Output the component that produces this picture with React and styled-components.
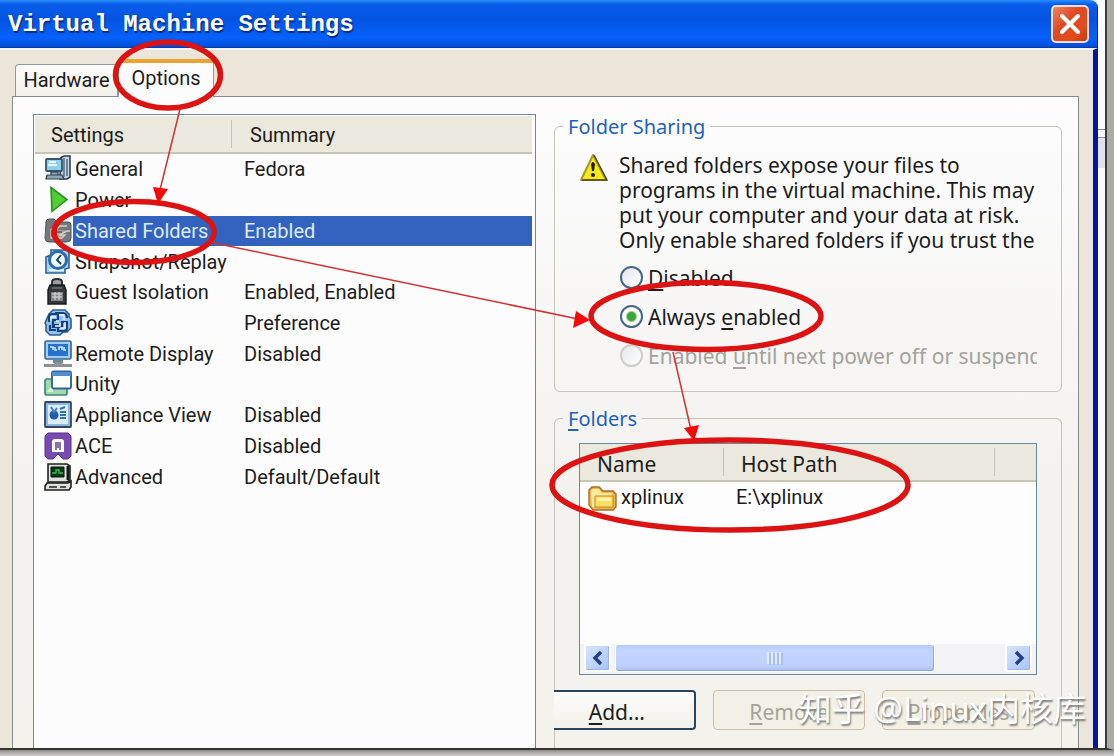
import React, { useState } from "react";
import styled, { createGlobalStyle } from "styled-components";

const settings = [
  { name: "General", summary: "Fedora", icon: "general" },
  { name: "Power", summary: "", icon: "power" },
  { name: "Shared Folders", summary: "Enabled", icon: "shared" },
  { name: "Snapshot/Replay", summary: "", icon: "snapshot" },
  { name: "Guest Isolation", summary: "Enabled, Enabled", icon: "guest" },
  { name: "Tools", summary: "Preference", icon: "tools" },
  { name: "Remote Display", summary: "Disabled", icon: "remote" },
  { name: "Unity", summary: "", icon: "unity" },
  { name: "Appliance View", summary: "Disabled", icon: "appliance" },
  { name: "ACE", summary: "Disabled", icon: "ace" },
  { name: "Advanced", summary: "Default/Default", icon: "advanced" },
];

const drawings = {
  general: (
    <>
      <path d="M17 2.5 20 1h6v21l-3 2h-7z" fill="#c9d8e4" stroke="#2c3e50" strokeWidth="1.6" />
      <path d="M20 3v19M23 4v17" stroke="#4a6478" strokeWidth="1.4" />
      <rect x="2" y="4" width="16" height="12" rx="1" fill="#8fd0f0" stroke="#34556e" strokeWidth="1.8" />
      <path d="M4 10h9M5 7h7" stroke="#e4f8ff" strokeWidth="2" />
      <path d="M7 17h7v3H7zM3 20h15l2 4H2z" fill="#8fa6b8" stroke="#2c3e50" strokeWidth="1.2" />
    </>
  ),
  power: <path d="M7 1.5 23 13.5 8 25.5z" fill="#4fce35" stroke="#2d8f20" strokeWidth="1.6" />,
  shared: (
    <>
      <path d="M2 5q0-3 3-3h5l3 3h11q3 0 3 3v13q0 4-4 4H5q-4 0-4-4z" fill="#72797c" stroke="#51585b" />
      <path d="M7 12h6l3-3h7M7 12v9h11l3-3h-6l8-4h3" fill="#a6a29d" stroke="#d2cec6" strokeWidth="1.4" />
      <path d="M8 13v7M11 15h7" stroke="#5a5c5d" strokeWidth="1.4" />
    </>
  ),
  snapshot: (
    <>
      <path d="M2 9l5-2v-5h18v18l-4 1v4H2z" fill="#a8d3f2" stroke="#2c639c" strokeWidth="1.6" />
      <path d="M5 22h15" stroke="#e6f5ff" strokeWidth="2" />
      <circle cx="14" cy="12" r="8.5" fill="#edf8ff" stroke="#2c6ba7" strokeWidth="3" />
      <path d="M17 7l-4 5 4 4" fill="none" stroke="#1b3f68" strokeWidth="2" />
    </>
  ),
  guest: (
    <>
      <path d="M8 8V4q0-3 5-3t5 3v4z" fill="#9da1a2" stroke="#2b2e2f" strokeWidth="2" />
      <path d="M6 7h14l2 5v14H4V12z" fill="#34383a" stroke="#191b1c" strokeWidth="1.4" />
      <path d="M7 14h12v9H7z" fill="#7e8384" />
      <path d="M8 16h10M8 19h10M11 14v8M15 14v8" stroke="#dadddd" strokeWidth="1" />
      <path d="M8 10h10" stroke="#6d7172" strokeWidth="1.5" />
    </>
  ),
  tools: (
    <>
      <path d="M5 5l4-4h12l4 4v3l2 2v9l-4 4h-4l-3 3H6l-4-4v-6l-1-2z" fill="#8ec3ed" stroke="#2d5d8c" strokeWidth="1.6" />
      <path d="M5 13V8q0-3 3-3h6v6H9v7h9v-5h5v6q0 3-3 3h-6v-6h-4M11 4h8q4 0 4 5M6 16v5h6" fill="none" stroke="#173f7b" strokeWidth="2.2" />
      <path d="M7 12V8h5M16 14v3h-5M15 6h5v5M21 13v6h-5M12 12h3" fill="none" stroke="#f0f9ff" strokeWidth="1.3" />
    </>
  ),
  remote: (
    <>
      <rect x="1" y="1" width="26" height="18" rx="1.5" fill="#a3cdf0" stroke="#35648d" strokeWidth="1.6" />
      <rect x="4" y="4" width="20" height="12" fill="#2572d0" />
      <path d="M6 7h3v3M11 7v3h2M15 10V7h3v3M20 7v3h2" fill="none" stroke="#cbecff" strokeWidth="1.6" />
      <path d="M9 20h10v3H9z" fill="#6e8497" />
      <path d="M0 24h10l2-2h5l2 2h9v3H0z" fill="#8e9295" />
    </>
  ),
  unity: (
    <>
      <rect x="1" y="9" width="22" height="16" rx="2" fill="#a3d9ad" stroke="#3e8580" strokeWidth="1.7" />
      <path d="M3 22L9 14v8z" fill="#d9f6db" />
      <rect x="8" y="1.5" width="19" height="17" rx="1.5" fill="#fbfdff" stroke="#346494" strokeWidth="1.9" />
      <path d="M8 4h19" stroke="#4f8fcb" strokeWidth="4" />
    </>
  ),
  appliance: (
    <>
      <rect x="1" y="1" width="26" height="25" rx="1" fill="#8eb9dd" stroke="#31465e" strokeWidth="1.8" />
      <rect x="4" y="4" width="20" height="19" fill="#dceefd" />
      <circle cx="10" cy="14" r="4.5" fill="#235fa8" />
      <path d="M7 6l3 5 3-4" fill="none" stroke="#3b83c9" strokeWidth="2" />
      <path d="M16 8l5-2M16 11h6M16 14h6M16 17h6" stroke="#3471b2" strokeWidth="2" />
    </>
  ),
  ace: (
    <>
      <path d="M4 1h20l3 3v20l-3 3h-5l-5-5-5 5H4l-3-3V4z" fill="#794bb0" stroke="#593188" />
      <path d="M8 20V10q0-3 3-3h6q3 0 3 3v10z" fill="#fff" />
      <path d="M11 10h6v8h-2v-2h-2v2h-2z" fill="#8b70a9" />
    </>
  ),
  advanced: (
    <>
      <path d="M4 1h19l3 2v14l-3 2H4z" fill="#dfe2dd" stroke="#1f2421" strokeWidth="1.6" />
      <path d="M7 4h13v10H7z" fill="#073b18" stroke="#111" />
      <path d="M8 10h4V7h3v3h4" fill="none" stroke="#3bb65e" strokeWidth="1.3" />
      <path d="M24 3v14" stroke="#151915" strokeWidth="3" />
      <path d="M3 20h21l3-2v6l-2 3H1v-4z" fill="#dfe0dc" stroke="#1b1f1b" strokeWidth="1.6" />
      <path d="M5 24h8M16 24h6" stroke="#202320" strokeWidth="1.6" />
    </>
  ),
};

const Annotations = () => (
  <Overlay width="1114" height="756" viewBox="0 0 1114 756" aria-hidden="true">
    <g fill="none" stroke="#dd1212" strokeWidth="5.5">
      <ellipse cx="168" cy="75" rx="52.5" ry="33" />
      <ellipse cx="134" cy="232" rx="80" ry="30.5" />
      <ellipse cx="706" cy="316" rx="115" ry="33.5" />
      <ellipse cx="730" cy="485" rx="178" ry="45" />
    </g>
    <path d="M180 109L160 190M214 243L578 319M673 352L691 430" fill="none" stroke="#d63030" strokeWidth="1.5" />
    <path d="M153 187l15 2-10 15zM576 311l14 9-17 8zM684 428l15-3-5 16z" fill="#f40808" />
  </Overlay>
);

const App = () => {
  const [selected, setSelected] = useState("Shared Folders");
  const [sharing, setSharing] = useState("always");

  return (
    <>
      <GlobalStyle />
      <Desktop>
        <Dialog>
          <TitleBar>
            <h1>Virtual Machine Settings</h1>
            <CloseButton aria-label="Close">
              <svg width="24" height="24" viewBox="0 0 24 24">
                <path d="M4 4L20 20M20 4L4 20" stroke="#fff" strokeWidth="4" strokeLinecap="round" />
              </svg>
            </CloseButton>
          </TitleBar>
          <Client>
            <Tabs role="tablist">
              <Tab role="tab">Hardware</Tab>
              <Tab role="tab" aria-selected="true" $active>
                Options
              </Tab>
            </Tabs>
            <TabPage>
              <SettingsList>
                <SettingsTable>
                  <colgroup>
                    <IconColumn />
                    <NameColumn />
                    <col />
                  </colgroup>
                  <thead>
                    <tr>
                      <th colSpan="2">Settings</th>
                      <th>Summary</th>
                    </tr>
                  </thead>
                  <tbody>
                    {settings.map((item) => (
                      <SettingRow
                        key={item.name}
                        $selected={item.name === selected}
                        onClick={() => setSelected(item.name)}
                      >
                        <td>
                          <svg width="28" height="28" viewBox="0 0 28 28">
                            {drawings[item.icon]}
                          </svg>
                        </td>
                        <td>{item.name}</td>
                        <td>{item.summary}</td>
                      </SettingRow>
                    ))}
                  </tbody>
                </SettingsTable>
              </SettingsList>

              <Details>
                <Group>
                  <legend>Folder Sharing</legend>
                  <Warning>
                    <svg width="30" height="30" viewBox="0 0 30 30">
                      <path d="M14 2l13 25H2z" fill="#f6ea16" stroke="#a69a22" strokeWidth="2" strokeLinejoin="round" />
                      <path d="M15 2l13 25H3" fill="none" stroke="#4c4520" strokeWidth="1.4" />
                      <path d="M12 11q2-4 4 0l-1 7h-2z" fill="#211d08" />
                      <circle cx="14" cy="22" r="2" fill="#211d08" />
                    </svg>
                    <p>
                      Shared folders expose your files to
                      <br />
                      programs in the virtual machine. This may
                      <br />
                      put your computer and your data at risk.
                      <br />
                      Only enable shared folders if you trust the
                    </p>
                  </Warning>
                  <Choices>
                    <Choice>
                      <input
                        type="radio"
                        name="sharing"
                        checked={sharing === "disabled"}
                        onChange={() => setSharing("disabled")}
                      />
                      <span>
                        <u>D</u>isabled
                      </span>
                    </Choice>
                    <Choice>
                      <input
                        type="radio"
                        name="sharing"
                        checked={sharing === "always"}
                        onChange={() => setSharing("always")}
                      />
                      <span>
                        Always <u>e</u>nabled
                      </span>
                    </Choice>
                    <Choice $disabled>
                      <input type="radio" name="sharing" disabled />
                      <span>
                        Enabled <u>u</u>ntil next power off or suspend
                      </span>
                    </Choice>
                  </Choices>
                </Group>

                <Group $open>
                  <legend>
                    <u>F</u>olders
                  </legend>
                  <FolderBox>
                    <FolderTable>
                      <thead>
                        <tr>
                          <th>Name</th>
                          <th>Host Path</th>
                          <th aria-label="Status" />
                        </tr>
                      </thead>
                      <tbody>
                        <tr>
                          <td>
                            <FolderName>
                              <svg width="30" height="26" viewBox="0 0 30 26">
                                <path d="M1 20V5l3-3h7l4 4h10l3 3v13l-3 3H5z" fill="#e9b54a" stroke="#a96d21" strokeWidth="1.4" />
                                <path d="M3 6l2-2h6l3 4h10v3H7v11H4z" fill="#ffe99b" />
                                <path d="M7 11h18v11H7z" fill="#fbdf64" stroke="#c4872a" />
                                <path d="M9 13h14v3H9z" fill="#fff3a6" />
                              </svg>
                              xplinux
                            </FolderName>
                          </td>
                          <td>E:\xplinux</td>
                          <td />
                        </tr>
                      </tbody>
                    </FolderTable>
                    <ScrollBar>
                      <ScrollButton aria-label="Scroll left">
                        <svg width="14" height="16" viewBox="0 0 14 16">
                          <path d="M10 2L4 8l6 6" fill="none" stroke="#233f87" strokeWidth="3.4" />
                        </svg>
                      </ScrollButton>
                      <Track>
                        <Thumb>
                          <svg width="16" height="14" viewBox="0 0 16 14">
                            <path d="M1 1v12M5 1v12M9 1v12M13 1v12" stroke="#edf3ff" strokeWidth="1.5" />
                            <path d="M3 2v12M7 2v12M11 2v12M15 2v12" stroke="#98b2ed" strokeWidth="1.2" />
                          </svg>
                        </Thumb>
                      </Track>
                      <ScrollButton aria-label="Scroll right">
                        <svg width="14" height="16" viewBox="0 0 14 16">
                          <path d="M4 2l6 6-6 6" fill="none" stroke="#233f87" strokeWidth="3.4" />
                        </svg>
                      </ScrollButton>
                    </ScrollBar>
                  </FolderBox>
                  <Actions>
                    <AddButton>
                      <u>A</u>dd...
                    </AddButton>
                    <ActionButton disabled>
                      <u>R</u>emove
                    </ActionButton>
                    <ActionButton disabled>
                      <u>P</u>roperties
                    </ActionButton>
                  </Actions>
                </Group>
              </Details>
            </TabPage>
          </Client>
        </Dialog>
        <Behind />
        <Annotations />
        <Watermark>知乎 @Linux内核库</Watermark>
      </Desktop>
    </>
  );
};

export default App;

const GlobalStyle = createGlobalStyle`
  * {
    box-sizing: border-box;
  }
  body {
    margin: 0;
    overflow: hidden;
    background: #bcbab6;
  }
  body, button, input {
    font-family: "Noto Sans", "Open Sans", sans-serif;
    font-size: 21px;
    line-height: 25px;
    color: #1c1c1c;
  }
  u {
    text-underline-offset: 3px;
    text-decoration-thickness: 2px;
  }
  svg {
    display: block;
    flex-shrink: 0;
  }
`;

const Desktop = styled.div`
  position: relative;
  display: flex;
  height: 100vh;
  padding-bottom: 6px;
  overflow: hidden;
  background: linear-gradient(to top, #d4d2ce, #8c8b88 6px, #fafaff 6px);
`;

const Dialog = styled.main`
  flex: 1;
  min-width: 0;
  display: flex;
  flex-direction: column;
  border-bottom: 2px solid #333532;
  border-top-right-radius: 8px;
  background: #ebe6d9;
  overflow: hidden;
`;

const Behind = styled.div`
  width: 16px;
  border-right: 7px solid #adaca2;
  border-bottom: 2px solid #333532;
  background:
    linear-gradient(#3c3c3c, #3c3c3c) right / 2px 100% no-repeat,
    linear-gradient(#8c8ab4, #8c8ab4) 0 129px / 100% 1px no-repeat,
    linear-gradient(#8c8ab4, #8c8ab4) 0 137px / 100% 1px no-repeat,
    linear-gradient(#e2e2ea, #e2e2ea) 0 138px / 100% 30px no-repeat,
    #fafaff;
`;

const TitleBar = styled.header`
  display: flex;
  align-items: center;
  justify-content: space-between;
  height: 48px;
  flex-shrink: 0;
  padding: 0 8px;
  border-right: 1px solid #0613a5;
  background: linear-gradient(#2a90fb, #0a5eea 4px, #0353e2 18px, #0562fb 38px, #0450d8 46px, #0338a8);
  h1 {
    margin: 0;
    font: bold 24px "Liberation Mono", monospace;
    color: #fff;
    text-shadow: 1px 2px 1px #0a2c7c;
  }
`;

const CloseButton = styled.button`
  display: flex;
  align-items: center;
  justify-content: center;
  width: 38px;
  height: 38px;
  padding: 0;
  border: 2px solid #f5dcdc;
  border-radius: 5px;
  background: linear-gradient(135deg, #ee8466, #dd4a24 40%, #e34a1a 75%, #c23a12);
`;

const Client = styled.div`
  flex: 1;
  min-height: 0;
  display: flex;
  flex-direction: column;
  padding: 10px 14px 0 12px;
  border-top: 2px solid #f4f6fb;
  border-right: 5px solid #0613a5;
`;

const Tabs = styled.div`
  display: flex;
  align-items: flex-end;
  height: 36px;
  flex-shrink: 0;
  padding-left: 3px;
`;

const Tab = styled.button`
  width: ${({ $active }) => ($active ? "96px" : "103px")};
  height: ${({ $active }) => ($active ? "38px" : "32px")};
  margin-bottom: ${({ $active }) => ($active ? "-1px" : "0")};
  padding: 0 0 ${({ $active }) => ($active ? "4px" : "0")};
  border: 1px solid #8d9a9c;
  border-top: ${({ $active }) => ($active ? "4px solid #eda233" : "1px solid #8d9a9c")};
  border-bottom: none;
  border-radius: 4px 4px 0 0;
  background: ${({ $active }) => ($active ? "#fcfcfd" : "linear-gradient(#fdfdfc, #f1f0ea)")};
  position: relative;
  z-index: ${({ $active }) => ($active ? 1 : 0)};
  font-family: Roboto, sans-serif;
  font-size: 20px;
`;

const TabPage = styled.section`
  flex: 1;
  min-height: 0;
  display: grid;
  grid-template-columns: 503fr 508fr;
  grid-template-rows: 100%;
  column-gap: 18px;
  padding: 17px 16px 0 20px;
  border: 1px solid #858c8b;
  border-bottom: none;
  background: linear-gradient(#fdfdfe, #f3f2ef 60%, #f3f2ed);
`;

const SettingsList = styled.div`
  min-width: 0;
  padding: 1px 3px 0 1px;
  border: 1px solid #6d8898;
  border-bottom: none;
  background: #fcfcfd;
`;

const SettingsTable = styled.table`
  width: 100%;
  height: 376px;
  border-collapse: collapse;
  table-layout: fixed;
  white-space: nowrap;
  font-family: Roboto, sans-serif;
  font-size: 20px;
  th {
    height: 37px;
    padding: 2px 0 0 16px;
    text-align: left;
    font-weight: normal;
    border-bottom: 2px solid #c9c5b5;
    background: linear-gradient(#c6c2b4, #c6c2b4) right / 1px 28px no-repeat, #ebe9dd;
  }
  th:last-child {
    padding-left: 18px;
    background: #ebe9dd;
  }
`;

const IconColumn = styled.col`
  width: 38px;
`;

const NameColumn = styled.col`
  width: 159px;
`;

const SettingRow = styled.tr`
  td {
    padding: 0;
    line-height: 28px;
    color: ${({ $selected }) => ($selected ? "#dfeaff" : "#1c1c1c")};
    background: ${({ $selected }) => ($selected ? "#3163bf" : "transparent")};
  }
  td:first-child {
    padding-left: 9px;
    background: none;
  }
  td:nth-child(2) {
    padding-left: 2px;
  }
  td:last-child {
    padding-left: 12px;
  }
`;

const Details = styled.div`
  min-width: 0;
  display: flex;
  flex-direction: column;
  gap: 14px;
`;

const Group = styled.fieldset`
  min-width: 0;
  margin: 0;
  padding: ${({ $open }) => ($open ? "12px 24px 0" : "14px 24px 23px")};
  border: 1px solid #c5c3ba;
  border-bottom-width: ${({ $open }) => ($open ? "0" : "1px")};
  border-radius: ${({ $open }) => ($open ? "6px 6px 0 0" : "6px")};
  flex: ${({ $open }) => ($open ? "1" : "none")};
  legend {
    margin-left: -16px;
    padding: 0 5px;
    font-size: 20px;
    color: #2360bd;
  }
`;

const Warning = styled.div`
  display: flex;
  gap: 10px;
  p {
    margin: 0;
    white-space: nowrap;
  }
`;

const Choices = styled.div`
  display: flex;
  flex-direction: column;
  gap: 14px;
  padding: 12px 0 0 41px;
`;

const Choice = styled.label`
  display: flex;
  align-items: center;
  gap: 5px;
  height: 25px;
  white-space: nowrap;
  color: ${({ $disabled }) => ($disabled ? "#a3a29c" : "inherit")};
  span {
    overflow: hidden;
    line-height: 32px;
  }
  input {
    appearance: none;
    flex-shrink: 0;
    width: 23px;
    height: 23px;
    margin: 0;
    border: 2px solid ${({ $disabled }) => ($disabled ? "#cfcec8" : "#476685")};
    border-radius: 50%;
    background: linear-gradient(135deg, #e3e7ec, #fff);
  }
  input:checked {
    background: radial-gradient(circle, #3aa635 4px, #fbfcfb 6px);
  }
`;

const FolderBox = styled.div`
  display: flex;
  flex-direction: column;
  justify-content: space-between;
  height: 232px;
  border: 1px solid #6d8898;
  background: #fdfdfe;
`;

const FolderTable = styled.table`
  width: 100%;
  border-collapse: collapse;
  table-layout: fixed;
  white-space: nowrap;
  th {
    height: 37px;
    padding: 4px 0 0 17px;
    text-align: left;
    font-weight: normal;
    border-bottom: 2px solid #c9c5b5;
    background: linear-gradient(#c6c2b4, #c6c2b4) right / 1px 28px no-repeat, #ebe9dd;
  }
  th:first-child {
    width: 144px;
  }
  th:last-child {
    width: 41px;
    background: #ebe9dd;
  }
  td {
    height: 32px;
    padding: 0 0 0 12px;
    font-family: Roboto, sans-serif;
    font-size: 20px;
  }
  td:first-child {
    padding-left: 8px;
  }
`;

const FolderName = styled.div`
  display: flex;
  align-items: center;
  gap: 3px;
`;

const ScrollBar = styled.div`
  display: flex;
  gap: 4px;
  height: 30px;
  padding: 0 4px 2px;
  background: #f3f3f5;
`;

const ScrollButton = styled.button`
  display: flex;
  align-items: center;
  justify-content: center;
  width: 27px;
  padding: 0;
  border: 2px solid #fff;
  border-radius: 3px;
  background: linear-gradient(135deg, #d6e4fd, #a9c4f7);
  box-shadow: inset -1px -1px #9db6ea;
`;

const Track = styled.div`
  flex: 1;
  display: flex;
`;

const Thumb = styled.div`
  display: flex;
  align-items: center;
  justify-content: center;
  width: 83%;
  border: 1px solid #fff;
  border-radius: 3px;
  background: linear-gradient(#b5cbfb, #c3d4fe 20%, #c0d1fd 80%, #a5bcf2);
  box-shadow: inset -1px -1px #8fa9de;
`;

const Actions = styled.div`
  display: grid;
  grid-template-columns: 143fr 154fr 154fr;
  gap: 17px;
  margin: 15px 2px 0 -25px;
`;

const ActionButton = styled.button`
  height: 40px;
  padding: 4px 0 0;
  border: 1px solid #cdbfa6;
  border-radius: 4px;
  background: #f3f1e6;
  &:disabled {
    color: #a5a49a;
  }
`;

const AddButton = styled(ActionButton)`
  padding-right: 14px;
  border: 2px solid #29455c;
  border-left: none;
  border-radius: 0 4px 4px 0;
  background: linear-gradient(#fdfdfd, #f1f0eb);
`;

const Overlay = styled.svg`
  position: absolute;
  top: 0;
  left: 0;
  z-index: 2;
  pointer-events: none;
`;

const Watermark = styled.div`
  position: absolute;
  right: 28px;
  bottom: 27px;
  z-index: 3;
  font: 33px/40px "Noto Sans", "Noto Sans CJK SC", sans-serif;
  white-space: nowrap;
  color: #fff;
  text-shadow: 1px 2px 2px #77777a;
  pointer-events: none;
`;
